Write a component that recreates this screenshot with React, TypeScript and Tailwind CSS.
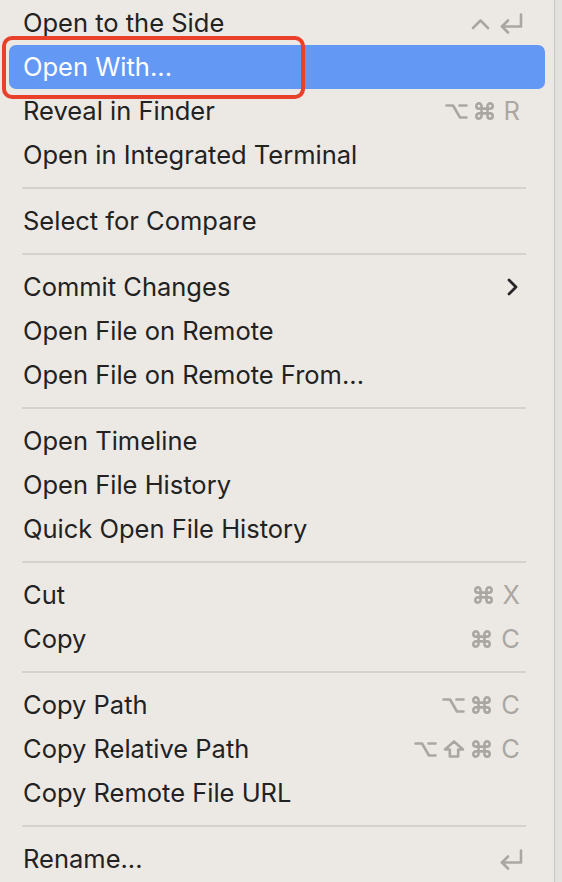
import React from "react";

type Item = {
  label: string;
  keys?: React.ReactNode;
  active?: boolean;
  submenu?: boolean;
};

// mac modifier glyphs, drawn so stroke weight matches the menu
const svgProps = {
  fill: "none",
  stroke: "currentColor",
  strokeWidth: 2.6,
  strokeLinecap: "round" as const,
  strokeLinejoin: "round" as const,
};

const ReturnIcon = () => (
  <svg width="25" height="21" viewBox="0 0 25 21" {...svgProps}>
    <path d="M22 1.5V13.5H3" />
    <path d="M9 7.5L3 13.5l6 6" />
  </svg>
);

const Ctrl = () => (
  <svg width="19" height="13" viewBox="0 0 19 13" {...svgProps}>
    <path d="M2 11L9.5 3.5 17 11" />
  </svg>
);

const Opt = () => (
  <svg width="23" height="17" viewBox="0 0 23 17" {...svgProps}>
    <path d="M1.5 2.5h6.5l7 12h6.5" />
    <path d="M14.5 2.5h7" />
  </svg>
);

const Shift = () => (
  <svg width="22" height="18" viewBox="0 0 22 18" {...svgProps}>
    <path d="M11 1.5L2 9.5h4.8v7h8.4v-7H20z" />
  </svg>
);

const Cmd = () => (
  <svg width="21" height="18" viewBox="0 0 21 18" {...svgProps}>
    <path d="M7.5 6.5V4A2.6 2.6 0 1 0 4.9 6.6H16.1A2.6 2.6 0 1 0 13.5 4V14A2.6 2.6 0 1 0 16.1 11.4H4.9A2.6 2.6 0 1 0 7.5 14Z" />
  </svg>
);

const Keys = ({ mods, letter }: { mods: React.ReactNode; letter: string }) => (
  <span className="flex items-center">
    <span className="flex items-center gap-[6px]">{mods}</span>
    <span className="ml-[9px]">{letter}</span>
  </span>
);

const sections: Item[][] = [
  [
    {
      label: "Open to the Side",
      keys: (
        <span className="flex items-center gap-[9px] -mr-[4px]">
          <Ctrl />
          <ReturnIcon />
        </span>
      ),
    },
    { label: "Open With...", active: true },
    {
      label: "Reveal in Finder",
      keys: <Keys mods={<><Opt /><Cmd /></>} letter="R" />,
    },
    { label: "Open in Integrated Terminal" },
  ],
  [{ label: "Select for Compare" }],
  [
    { label: "Commit Changes", submenu: true },
    { label: "Open File on Remote" },
    { label: "Open File on Remote From..." },
  ],
  [
    { label: "Open Timeline" },
    { label: "Open File History" },
    { label: "Quick Open File History" },
  ],
  [
    { label: "Cut", keys: <Keys mods={<Cmd />} letter="X" /> },
    { label: "Copy", keys: <Keys mods={<Cmd />} letter="C" /> },
  ],
  [
    { label: "Copy Path", keys: <Keys mods={<><Opt /><Cmd /></>} letter="C" /> },
    {
      label: "Copy Relative Path",
      keys: <Keys mods={<><Opt /><Shift /><Cmd /></>} letter="C" />,
    },
    { label: "Copy Remote File URL" },
  ],
  [
    {
      label: "Rename...",
      keys: (
        <span className="flex -mr-[4px]">
          <ReturnIcon />
        </span>
      ),
    },
  ],
];

function Row({ item }: { item: Item }) {
  return (
    <div className="h-[44px] px-[9px] flex">
      <div
        className={
          "flex-1 flex items-center justify-between pl-[14px] pr-[25px] rounded-[7px] " +
          (item.active ? "bg-[#6399f5] text-white" : "text-[#222222]")
        }
      >
        <span>{item.label}</span>
        {item.keys && <span className="text-[#aaa7a3]">{item.keys}</span>}
        {item.submenu && (
          <svg width="14" height="20" viewBox="0 0 14 20" fill="none" stroke="#262626" strokeWidth="2.8" strokeLinecap="round" strokeLinejoin="round">
            <path d="M3 3l7 7-7 7" />
          </svg>
        )}
      </div>
    </div>
  );
}

export default function App() {
  return (
    <div className="w-[562px] h-[882px] bg-[#ece9e5] flex overflow-hidden font-['Inter',sans-serif] text-[25.5px]">
      <div className="relative w-[554px] flex flex-col pt-px">
        {sections.map((section, i) => (
          <div key={i}>
            {i > 0 && (
              <div className="h-[22px] flex items-center pl-[22px] pr-[28px]">
                <div className="h-[2px] w-full bg-[#d5d2ce]" />
              </div>
            )}
            {section.map((item) => (
              <Row key={item.label} item={item} />
            ))}
          </div>
        ))}
        <div className="absolute left-[2px] top-[36px] w-[303px] h-[63px] border-4 border-[#e8402a] rounded-[10px]" />
      </div>
      <div className="w-px bg-[#c9c6c3]" />
      <div className="flex-1 bg-[#e4e2df]" />
    </div>
  );
}
